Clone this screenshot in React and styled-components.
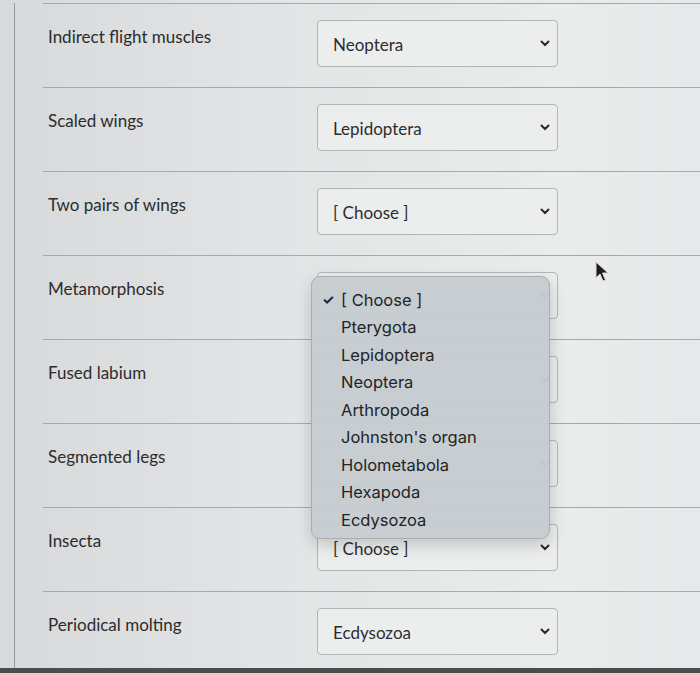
import React from 'react';
import styled, { createGlobalStyle } from 'styled-components';

const rows = [
  { label: 'Indirect flight muscles', value: 'Neoptera' },
  { label: 'Scaled wings', value: 'Lepidoptera' },
  { label: 'Two pairs of wings', value: '[ Choose ]' },
  { label: 'Metamorphosis', value: '', open: true },
  { label: 'Fused labium', value: '' },
  { label: 'Segmented legs', value: '' },
  { label: 'Insecta', value: '[ Choose ]' },
  { label: 'Periodical molting', value: 'Ecdysozoa' },
];

const options = [
  '[ Choose ]',
  'Pterygota',
  'Lepidoptera',
  'Neoptera',
  'Arthropoda',
  "Johnston's organ",
  'Holometabola',
  'Hexapoda',
  'Ecdysozoa',
];

const Chevron = () => (
  <svg width="10" height="7" viewBox="0 0 10 7">
    <path d="M1.5 1.5 L5 5 L8.5 1.5" fill="none" stroke="#2a2a2a" strokeWidth="2" strokeLinecap="round" />
  </svg>
);

const Cursor = () => (
  <svg width="16" height="22" viewBox="0 0 16 22">
    <path d="M2 1 L2 17 L6 13 L9 20 L11.5 19 L8.5 12 L14 12 Z" fill="#1c1c1c" stroke="#d8dadb" strokeWidth="1" />
  </svg>
);

class App extends React.Component {
  render() {
    return (
      <React.Fragment>
        <GlobalStyle />
        <Page>
          <Frame>
            {rows.map(({ label, value, open }) => (
              <Row key={label}>
                <Label>{label}</Label>
                <SelectWrap>
                  <Select>
                    <SelectText>{value}</SelectText>
                    <Chevron />
                  </Select>
                  {open && (
                    <Menu>
                      {options.map((opt, i) => (
                        <MenuItem key={opt}>
                          <Check>{i === 0 ? '✓' : ''}</Check>
                          {opt}
                        </MenuItem>
                      ))}
                    </Menu>
                  )}
                </SelectWrap>
              </Row>
            ))}
          </Frame>
          <Pointer>
            <Cursor />
          </Pointer>
          <BottomBar />
        </Page>
      </React.Fragment>
    );
  }
}

const GlobalStyle = createGlobalStyle`
  html, body {
    margin: 0;
    padding: 0;
  }
  body {
    font-family: Lato, "Liberation Sans", sans-serif;
    background: #e3e5e6;
  }
`;

const Page = styled.div`
  position: relative;
  width: 700px;
  height: 673px;
  overflow: hidden;
  background: linear-gradient(90deg, #d7d9da 0%, #e2e4e5 40%, #eaecec 80%, #e6e8e9 100%);
  padding-top: 3px;
  box-sizing: border-box;
`;

const Frame = styled.div`
  margin-left: 14px;
  padding-left: 28px;
  border-left: 1px solid #97999a;
  height: 665px;
`;

const Row = styled.div`
  display: flex;
  align-items: flex-start;
  height: 84px;
  box-sizing: border-box;
  border-top: 1px solid #a7a9aa;
  &:last-child {
    height: 81px;
  }
`;

const Label = styled.div`
  width: 274px;
  box-sizing: border-box;
  padding: 23px 0 0 5px;
  font-size: 17px;
  line-height: 20px;
  color: #2b2c2d;
  letter-spacing: 0;
`;

const SelectWrap = styled.div`
  position: relative;
  margin-top: 16px;
`;

const Select = styled.div`
  display: flex;
  align-items: center;
  justify-content: space-between;
  width: 241px;
  height: 47px;
  box-sizing: border-box;
  padding: 0 7px 0 15px;
  border: 1px solid #b3b5b6;
  border-radius: 4px;
  background: #eceeee;
`;

const SelectText = styled.span`
  font-size: 17px;
  color: #2c2d2e;
  padding-top: 2px;
`;

const Menu = styled.div`
  position: absolute;
  left: -6px;
  top: 4px;
  width: 239px;
  height: 263px;
  box-sizing: border-box;
  padding-top: 9px;
  background: rgba(198, 203, 208, 0.97);
  border: 1px solid #a9aeb3;
  border-radius: 9px;
  box-shadow: 0 6px 16px rgba(0, 0, 0, 0.18);
  z-index: 2;
`;

const MenuItem = styled.div`
  display: flex;
  align-items: center;
  height: 27.5px;
  font-family: Inter, "Open Sans", sans-serif;
  font-size: 16.5px;
  color: #222426;
`;

const Check = styled.span`
  width: 29px;
  padding-left: 10px;
  box-sizing: border-box;
  font-size: 14px;
  font-weight: 700;
`;

const Pointer = styled.div`
  position: absolute;
  left: 594px;
  top: 261px;
`;

const BottomBar = styled.div`
  position: absolute;
  left: 0;
  right: 0;
  bottom: 0;
  height: 5px;
  background: #4a4c4e;
`;

export default App;
